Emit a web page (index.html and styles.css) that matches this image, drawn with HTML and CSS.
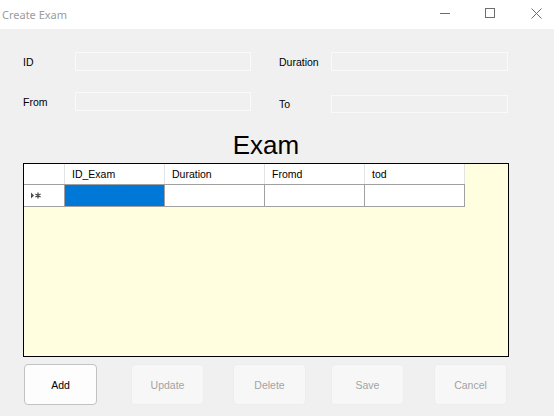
FILE: index.html
```html
<!DOCTYPE html>
<html>
<head>
<meta charset="utf-8">
<title>Create Exam</title>
<link rel="stylesheet" href="styles.css">
</head>
<body>
<div class="window">
  <div class="titlebar">
    <span class="title">Create Exam</span>
    <div class="controls">
      <svg class="ctl ctl-min" width="10" height="10" viewBox="0 0 10 10"><line x1="0" y1="5.5" x2="10" y2="5.5" stroke="#6d6d6d" stroke-width="1"/></svg>
      <svg class="ctl ctl-max" width="10" height="10" viewBox="0 0 10 10"><rect x="0.5" y="0.5" width="9" height="9" fill="none" stroke="#6d6d6d" stroke-width="1"/></svg>
      <svg class="ctl ctl-close" width="11" height="11" viewBox="0 0 11 11"><path d="M0.5 0.5 L10.5 10.5 M10.5 0.5 L0.5 10.5" stroke="#6d6d6d" stroke-width="1" fill="none"/></svg>
    </div>
  </div>
  <div class="main">
    <div class="fields">
      <div class="col col-left">
        <div class="field">
          <span class="label">ID</span>
          <div class="box box-l"></div>
        </div>
        <div class="field field-l2">
          <span class="label">From</span>
          <div class="box box-l"></div>
        </div>
      </div>
      <div class="col col-right">
        <div class="field">
          <span class="label">Duration</span>
          <div class="box box-r"></div>
        </div>
        <div class="field field-r2">
          <span class="label">To</span>
          <div class="box box-r box-short"></div>
        </div>
      </div>
    </div>
    <div class="gridwrap">
      <div class="heading">Exam</div>
      <div class="grid">
        <div class="dg-head">
          <div class="hc hc-corner"></div>
          <div class="hc">ID_Exam</div>
          <div class="hc">Duration</div>
          <div class="hc">Fromd</div>
          <div class="hc">tod</div>
        </div>
        <div class="dg-row">
          <div class="rc rc-head">
            <svg width="11" height="7" viewBox="0 0 11 7">
              <polygon points="0,0.5 3,3.5 0,6.5" fill="#4a4a4a"/>
              <path d="M7 0.5 V6.5 M4.4 2 L9.6 5 M9.6 2 L4.4 5" stroke="#4a4a4a" stroke-width="1.3" fill="none"/>
            </svg>
          </div>
          <div class="rc rc-sel"></div>
          <div class="rc"></div>
          <div class="rc"></div>
          <div class="rc"></div>
        </div>
      </div>
    </div>
    <div class="buttons">
      <button class="btn btn-add">Add</button>
      <button class="btn btn-off b-update" disabled>Update</button>
      <button class="btn btn-off b-delete" disabled>Delete</button>
      <button class="btn btn-off b-save" disabled>Save</button>
      <button class="btn btn-off b-cancel" disabled>Cancel</button>
    </div>
  </div>
</div>
</body>
</html>
```

FILE: styles.css
```css
html, body {
  margin: 0;
  padding: 0;
}
body {
  width: 554px;
  height: 416px;
  overflow: hidden;
  background: #f0f0f0;
  font-family: "Liberation Sans", Arial, sans-serif;
  font-size: 10.5px;
  color: #000;
}
.window {
  width: 554px;
  height: 416px;
  display: flex;
  flex-direction: column;
}
.titlebar {
  height: 29px;
  background: #fff;
  display: flex;
  align-items: center;
  justify-content: space-between;
  flex-shrink: 0;
}
.title {
  font-family: "Noto Sans", "Open Sans", sans-serif;
  font-size: 11px;
  color: #9c9c9c;
  margin-left: 2px;
  margin-top: -1px;
}
.controls {
  align-self: flex-start;
  padding-top: 8px;
  padding-right: 12px;
  display: flex;
  align-items: flex-start;
}
.ctl { display: block; }
.ctl-max { margin-left: 35px; }
.ctl-close { margin-left: 36px; }

.main {
  padding: 23px 0 0 23px;
  display: flex;
  flex-direction: column;
}
.fields {
  display: flex;
}
.col {
  display: flex;
  flex-direction: column;
}
.col-left { width: 256px; }
.field {
  display: flex;
  align-items: center;
}
.label {
  width: 52px;
  flex-shrink: 0;
}
.box {
  height: 17px;
  background: #f0f0f0;
  border: 1px solid #fafafa;
  box-sizing: content-box;
}
.box-l { width: 174px; }
.box-r { width: 175px; }
.box-short { height: 16px; }
.field-l2 { margin-top: 21px; }
.field-r2 { margin-top: 24px; }

.gridwrap {
  width: 486px;
  display: flex;
  flex-direction: column;
  margin-top: 18px;
}
.heading {
  text-align: center;
  font-size: 26px;
  line-height: 29px;
  height: 29px;
}
.grid {
  margin-top: 3px;
  height: 194px;
  box-sizing: border-box;
  border: 1px solid #000;
  background: #ffffe0;
  display: flex;
  flex-direction: column;
}
.dg-head {
  display: flex;
  width: 441px;
  height: 20px;
  background: #fff;
}
.hc {
  width: 92px;
  padding-left: 7px;
  border-right: 1px solid #e3e3e3;
  display: flex;
  align-items: center;
}
.hc-corner { width: 40px; padding-left: 0; }
.dg-row {
  display: flex;
  width: 441px;
  height: 21px;
  border-top: 1px solid #a0a0a0;
  border-bottom: 1px solid #a0a0a0;
  background: #fff;
}
.rc {
  width: 99px;
  border-right: 1px solid #a0a0a0;
}
.rc-head {
  width: 40px;
  display: flex;
  align-items: center;
  padding-left: 7px;
  box-sizing: content-box;
  width: 33px;
}
.rc-sel { background: #0078d7; }

.buttons {
  display: flex;
  margin-top: 7px;
  margin-left: 1px;
}
.btn {
  width: 73px;
  height: 41px;
  box-sizing: border-box;
  font-family: "Liberation Sans", Arial, sans-serif;
  font-size: 10.5px;
  border-radius: 4px;
  padding: 0;
}
.btn-add {
  background: #fdfdfd;
  border: 1px solid #c2c2c2;
  color: #000;
}
.btn-off {
  background: #f7f7f7;
  border: 1px solid #ededed;
  color: #a3a3a3;
}
.b-update { margin-left: 34px; }
.b-delete { margin-left: 29px; }
.b-save { margin-left: 25px; }
.b-cancel { margin-left: 30px; }
```
